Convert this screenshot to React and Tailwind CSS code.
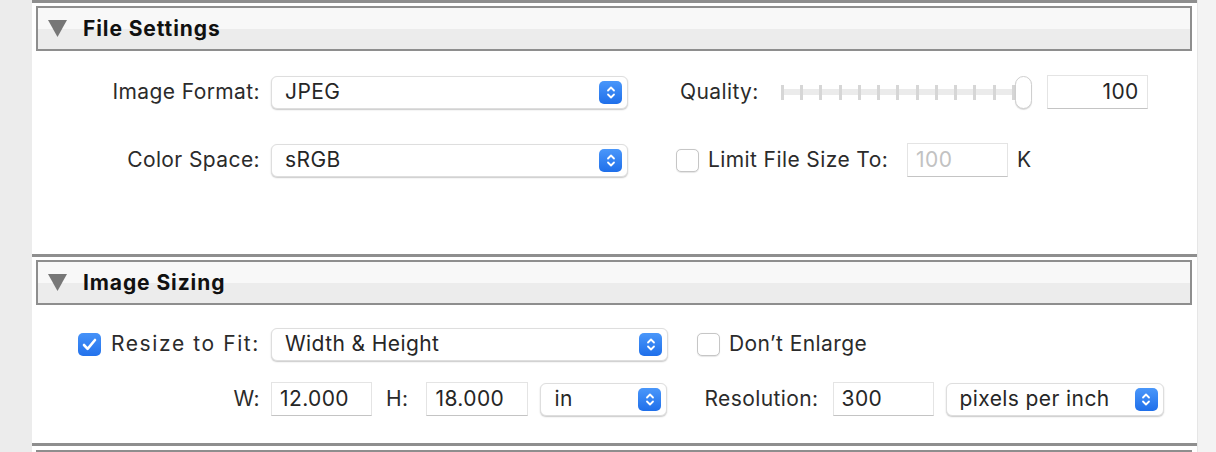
import React from 'react';

const font = { fontFamily: 'Inter, "Liberation Sans", sans-serif' };

const Stepper = () => (
  <div className="w-[23px] h-[23px] rounded-[5px] bg-[linear-gradient(#4a97fa,#1f6fea)] flex items-center justify-center shrink-0">
    <svg width="10" height="15" viewBox="0 0 10 15" fill="none" stroke="white" strokeWidth="1.8" strokeLinecap="round" strokeLinejoin="round">
      <path d="M2 5.5 L5 2.5 L8 5.5" />
      <path d="M2 9.5 L5 12.5 L8 9.5" />
    </svg>
  </div>
);

const Select = ({ value, width }) => (
  <div
    className={`h-[33px] ${width} rounded-[6px] bg-white border border-[#dedede] shadow-[0_1px_1.5px_rgba(0,0,0,0.22)] flex items-center justify-between pl-[13px] pr-[5px] shrink-0`}
  >
    <span className="text-[21px] tracking-[0.4px] text-[#262626]">{value}</span>
    <Stepper />
  </div>
);

const Field = ({ value, width, right, disabled }) => (
  <div
    className={`h-[34px] ${width} bg-white border border-[#e4e4e4] border-b-[#c4c4c4] flex items-center px-[8px] shrink-0 ${right ? 'justify-end' : ''}`}
  >
    <span className={`text-[21px] tracking-[0.4px] ${disabled ? 'text-[#c2c2c2]' : 'text-[#262626]'}`}>{value}</span>
  </div>
);

const Checkbox = ({ checked }) =>
  checked ? (
    <div className="w-[23px] h-[23px] rounded-[5px] bg-[linear-gradient(#4692f8,#2372ec)] flex items-center justify-center shrink-0">
      <svg width="15" height="13" viewBox="0 0 15 13" fill="none" stroke="white" strokeWidth="2.6" strokeLinecap="round" strokeLinejoin="round">
        <path d="M2 7 L5.6 10.8 L13 2" />
      </svg>
    </div>
  ) : (
    <div className="w-[23px] h-[23px] rounded-[5px] bg-white border border-[#c6c6c6] shadow-[0_0.5px_1px_rgba(0,0,0,0.1)] shrink-0" />
  );

const Label = ({ children, className = '' }) => (
  <span className={`text-[21px] text-[#2b2b2b] whitespace-nowrap ${className}`}>{children}</span>
);

const SectionHeader = ({ title }) => (
  <div className="ml-[4px] mr-[5px] h-[45px] border-2 border-[#8e8e8e] bg-[linear-gradient(#f8f8f8_50%,#ececec_50%)] flex items-center">
    <svg width="19" height="17" viewBox="0 0 19 17" className="ml-[10px]">
      <path d="M0 0 H19 L9.5 17 Z" fill="#777777" />
    </svg>
    <span className="ml-[16px] text-[21px] tracking-[0.9px] font-bold text-[#111]">{title}</span>
  </div>
);

const Slider = () => {
  const ticks = Array.from({ length: 13 });
  return (
    <div className="relative w-[252px] h-[34px] flex items-center shrink-0">
      <div className="absolute left-[1px] right-[14px] h-[6px] bg-[#ebebeb] rounded-[2px]" />
      <div className="absolute left-[1px] right-[17px] h-[15px] flex justify-between">
        {ticks.map((_, i) => (
          <div key={i} className="w-[3px] h-[15px] bg-[#d6d6d6]" />
        ))}
      </div>
      <div className="absolute right-0 w-[17px] h-[33px] rounded-full bg-white border border-[#cfcfcf] shadow-[0_1px_1px_rgba(0,0,0,0.15)]" />
    </div>
  );
};

export default function App() {
  return (
    <div className="flex w-[1216px] h-[452px] overflow-hidden bg-white" style={font}>
      <div className="w-[32px] bg-[#ececec] shrink-0" />
      <div className="w-[1165px] shrink-0 bg-white">
        <div className="h-[3px] bg-[#8e8e8e]" />
        <div className="h-[3px]" />
        <SectionHeader title="File Settings" />

        <div className="h-[203px] pt-[24px]">
          <div className="flex items-center h-[34px]">
            <div className="w-[228px] flex justify-end">
              <Label className="tracking-[0.4px]">Image Format:</Label>
            </div>
            <div className="ml-[11px]">
              <Select value="JPEG" width="w-[357px]" />
            </div>
            <Label className="ml-[52px] tracking-[0.4px]">Quality:</Label>
            <div className="ml-[21px]">
              <Slider />
            </div>
            <div className="ml-[15px]">
              <Field value="100" width="w-[101px]" right />
            </div>
          </div>

          <div className="flex items-center h-[34px] mt-[34px]">
            <div className="w-[228px] flex justify-end">
              <Label className="tracking-[0.4px]">Color Space:</Label>
            </div>
            <div className="ml-[11px]">
              <Select value="sRGB" width="w-[357px]" />
            </div>
            <div className="ml-[48px]">
              <Checkbox />
            </div>
            <Label className="ml-[9px] tracking-[0.4px]">Limit File Size To:</Label>
            <div className="ml-[19px]">
              <Field value="100" width="w-[101px]" disabled />
            </div>
            <Label className="ml-[9px] tracking-[0.4px]">K</Label>
          </div>
        </div>

        <div className="h-[3px] bg-[#8e8e8e]" />
        <div className="h-[3px]" />
        <SectionHeader title="Image Sizing" />

        <div className="h-[138px] pt-[22px]">
          <div className="flex items-center h-[34px]">
            <div className="w-[228px] flex items-center pl-[46px]">
              <Checkbox checked />
              <Label className="ml-auto tracking-[1.6px]">Resize to Fit:</Label>
            </div>
            <div className="ml-[11px]">
              <Select value="Width & Height" width="w-[397px]" />
            </div>
            <div className="ml-[29px]">
              <Checkbox />
            </div>
            <Label className="ml-[9px] tracking-[0.4px]">Don’t Enlarge</Label>
          </div>

          <div className="flex items-center h-[34px] mt-[21px]">
            <div className="w-[228px] flex justify-end">
              <Label className="tracking-[0.4px]">W:</Label>
            </div>
            <div className="ml-[11px]">
              <Field value="12.000" width="w-[101px]" />
            </div>
            <Label className="ml-[14px] tracking-[0.4px]">H:</Label>
            <div className="ml-[18px]">
              <Field value="18.000" width="w-[102px]" />
            </div>
            <div className="ml-[12px]">
              <Select value="in" width="w-[127px]" />
            </div>
            <Label className="ml-[37px] tracking-[0.4px]">Resolution:</Label>
            <div className="ml-[14px]">
              <Field value="300" width="w-[101px]" />
            </div>
            <div className="ml-[12px]">
              <Select value="pixels per inch" width="w-[218px]" />
            </div>
          </div>
        </div>

        <div className="h-[3px] bg-[#8e8e8e]" />
        <div className="h-[4px]" />
        <div className="ml-[4px] mr-[5px] h-[45px] border-2 border-[#8e8e8e] bg-[#f8f8f8]" />
      </div>
      <div className="flex-1 bg-[#f3f3f3] border-l border-[#e6e6e6]" />
    </div>
  );
}
